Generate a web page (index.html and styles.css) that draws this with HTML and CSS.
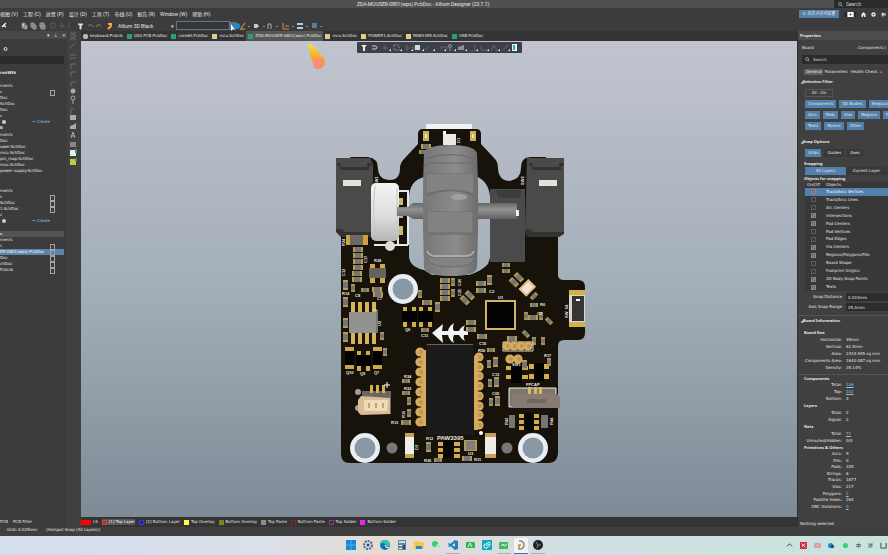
FILE: index.html
```html
<!DOCTYPE html>
<html lang="en">
  <head>
    <meta charset="UTF-8" />
    <meta name="viewport" content="width=device-width, initial-scale=1.0" />
    <title>ZDA-MOUSER-0801(wpx).PcbDoc - Altium Designer (23.7.1)</title>
    <link rel="stylesheet" href="styles.css">
  </head>
  <body>
    <header class="titlebar">
      <span class="title">ZDA-MOUSER-0801(wpx).PcbDoc - Altium Designer (23.7.1)</span>
      <label class="title-search"><svg class="ico" viewBox="0 0 10 10"><circle cx="4" cy="4" r="3"/><path d="M6 6l3 3"/></svg><input type="text" placeholder="Search" aria-label="Search"></label>
    </header>
    <nav class="menubar">
      <button>视图 (V)</button>
      <button>工程 (C)</button>
      <button>放置 (P)</button>
      <button>设计 (D)</button>
      <button>工具 (T)</button>
      <button>布线 (U)</button>
      <button>报告 (R)</button>
      <button>Window (W)</button>
      <button>帮助 (H)</button>
      <div class="account">
        <button class="license">D&nbsp; 自定义许可証書</button>
        <button class="share" aria-label="Share"><svg class="ico" viewBox="0 0 10 8"><rect x="0" y="0" width="10" height="8" fill="#fff" stroke="none"/><path d="M3 4h4M5 2v4" stroke="#333"/></svg></button>
        <button aria-label="Home"><svg class="ico solid" viewBox="0 0 10 10"><path d="M5 0l5 5H9v5H6V7H4v3H1V5H0z"/></svg></button>
        <button aria-label="Settings"><svg class="ico" viewBox="0 0 10 10"><circle cx="5" cy="5" r="3" stroke-width="3"/></svg></button>
        <button aria-label="User"><svg class="ico solid" viewBox="0 0 12 10"><circle cx="4" cy="4" r="3"/><path d="M0 9q4-4 8 0zM8 2h3v6H8z"/></svg></button>
      </div>
    </nav>
    <div class="toolbar">
      <svg class="tools" viewBox="0 0 115 12">
        <path d="M2 7l4-4M3 5l3 2" stroke="#eee" stroke-width="1.5"/>
        <path d="M22 3h3v5h-3zM24 5h3v4h-3z" fill="#ddd" stroke="#777"/>
        <path d="M31 3h3v4h-3zM33 5h3v4h-3zM40 3h4v4h-4zM41 5h4v4h-4z" fill="#777" stroke="#999"/>
        <path d="M51 3h4v5h-4zM62 3v6M59 6h6M69 3v6" stroke="#575a66"/>
        <path d="M78 4h5l-2 2v3h-1V5z" fill="#ddd" stroke="#ddd"/>
        <path d="M88 6q3-3 5 1M101 6q-3-3-5 1" stroke="#a97d4d"/>
        <path d="M108 4h3v2l-3 3" stroke="#f3aa3b" stroke-width="2"/>
      </svg>
      <span class="block-name">Altium 3D Black</span>
      <button class="arrow" aria-label="Choose view">▾</button>
      <input class="command" type="text" aria-label="Command">
      <svg class="tools2" viewBox="0 0 95 12">
        <rect x="0" y="2" width="6" height="8" fill="#47799f"/>
        <circle cx="7" cy="6" r="3" fill="#2585c5"/>
        <path d="M1 4v7l2-2 2 1z" fill="#fff"/>
        <path d="M11 8l4-5M10 9h5" stroke="#e0b03c"/>
        <path d="M24 4h3l2 2-2 2h-3z" fill="#ccc"/>
        <path d="M38 9V4h3v5" stroke="#aaa"/>
        <path d="M53 3v6h6M55 6h4" stroke="#cc9151"/>
        <path d="M67 3h6v2h-6zM67 7h6v2h-6z" fill="#a9d4f2"/>
        <path d="M82 3h5v5h-5z" fill="#547d9b"/>
        <path d="M18 6h2l-1 1zM33 6h2l-1 1zM46 6h2l-1 1zM62 6h2l-1 1zM76 6h2l-1 1zM90 6h2l-1 1z" fill="#ddd"/>
      </svg>
    </div>

    <main class="workspace">
      <aside class="projects">
        <div class="panel-head"><span>▾</span><span>⊥</span><span>×</span></div>
        <button class="gear" aria-label="Options"><svg class="ico" viewBox="0 0 10 10"><circle cx="5" cy="5" r="3" stroke-width="2"/></svg></button>
        <input class="project-search" type="text" aria-label="Search projects">
        <div class="workspace-name">rsnWtk</div>
        <ul class="tree">
          <li>ments</li>
          <li class="file">s</li>
          <li>Doc</li>
          <li>SchDoc</li>
          <li>Doc</li>
          <li>s</li>
          <li class="create"><i></i><a href="#">+ Create</a></li>
          <li><b>B</b></li>
        </ul>
        <ul class="tree">
          <li>ments</li>
          <li>Doc</li>
          <li>ower.SchDoc</li>
          <li>mcu.SchDoc</li>
          <li>pin_map.SchDoc</li>
          <li>mcu.SchDoc</li>
          <li>power supply.SchDoc</li>
        </ul>
        <ul class="tree tree-next">
          <li>ments</li>
          <li class="file">s</li>
          <li class="file">SchDoc</li>
          <li class="file">1.SchDoc</li>
          <li>c</li>
          <li class="create"><i></i><a href="#">+ Create</a></li>
        </ul>
        <ul class="tree tree-open">
          <li class="current"><b>s</b></li>
          <li>ments</li>
          <li class="file">c</li>
          <li class="file selected">ER-0801(wpx).PcbDoc</li>
          <li class="file">Doc</li>
          <li class="file">chDoc</li>
          <li class="file">PcbLib</li>
        </ul>
        <div class="panel-tabs"><button>PCB</button><button>PCB Filter</button></div>
      </aside>

      <div class="strip">
        <svg viewBox="0 0 12 140">
          <path d="M3 2h6M3 4h6M3 6l6 3M3 9l6-4M3 17l5-5M3 24h6M3 27h6M4 38v-5h5M4 46v-5h5M4 55v-4h5M4 83v-5h3" stroke="#6a6c6e"/>
          <circle cx="6" cy="60" r="2.500" fill="#aaa"/>
          <circle cx="6" cy="67" r="2" stroke="#aaa"/><path d="M6 69v4" stroke="#aaa"/>
          <path d="M3 84h6v5H3zM3 98v-3l3-1 3-2v6z" fill="#aaa"/>
          <path d="M4 107l2-6 2 6M4 105h4" stroke="#aaa"/>
          <path d="M3 111h6v5H3z" fill="#987d83"/>
          <path d="M3 119h6v6H3z" fill="#e6f0ed"/><path d="M3 128h6v6H3z" fill="#b9cf46"/><path d="M8 118h2v4H8zM8 127h2v3H8z" fill="#1aa86b"/>
        </svg>
      </div>

      <section class="editor">
        <div class="doc-tabs">
          <button><i class="lib"></i>keyboard.PcbLib</button>
          <button><i class="pcb"></i>QS2.PCB.PcbDoc</button>
          <button><i class="pcb"></i>core60.PcbDoc</button>
          <button><i class="sch"></i>mcu.SchDoc</button>
          <button class="active"><i class="pcb"></i>ZDA-MOUSER-0801(wpx).PcbDoc</button>
          <button><i class="sch"></i>mcu.SchDoc</button>
          <button><i class="sch"></i>POWER1.SchDoc</button>
          <button><i class="sch"></i>PAW3395.SchDoc</button>
          <button><i class="pcb"></i>USB.PcbDoc</button>
        </div>
        <div class="canvas">
          <svg class="active-bar" viewBox="0 0 165 11">
            <path d="M4 3h6L8 5v4H6V5z" fill="#eee"/>
            <path d="M15 4h4q2 1 0 3h-4" stroke="#ccc"/>
            <path d="M28 3v5M26 6h5M57 9V5h-3M50 3v6M49 6h4M72 4l-4 4M84 8V4l3 2 3-2v4M114 9h4V3M124 4v4h6M134 9l3-6 3 6M146 8l5-5" stroke="#62666d"/>
            <path d="M37 3h5v5h-5z" stroke="#7f858c" stroke-dasharray="2 1"/>
            <rect x="58" y="3" width="5" height="5" fill="#cbdde9"/>
            <circle cx="93" cy="4" r="1.500" stroke="#999"/><path d="M93 6v3" stroke="#999"/>
            <path d="M101 8V5l3-1 3-1v5z" fill="#998f91"/>
            <path d="M155 2h5v7h-5z" fill="#f1f7fa"/><path d="M156 3h2v5h-2z" fill="#28a0c4"/>
            <path d="M32 9h2V7zM43 9h2V7zM54 9h2V7zM65 9h2V7zM76 9h2V7zM87 9h2V7zM97 9h2V7zM108 9h2V7zM119 9h2V7zM130 9h2V7zM141 9h2V7zM151 9h2V7z" fill="#fff"/>
          </svg>
          <svg class="board" viewBox="81 41 716 476" role="img" aria-label="3D view of the mouse board">
            <defs>
              <linearGradient id="wheel" x1="0" y1="0" x2="1" y2="0">
                <stop offset="0" stop-color="#777"/><stop offset=".6" stop-color="#8c8c8c"/><stop offset="1" stop-color="#6d6d6d"/>
              </linearGradient>
              <linearGradient id="shaft" x1="0" y1="0" x2="0" y2="1">
                <stop offset="0" stop-color="#666"/><stop offset=".4" stop-color="#929292"/><stop offset="1" stop-color="#626262"/>
              </linearGradient>
              <linearGradient id="knob" x1="0" y1="0" x2="0" y2="1">
                <stop offset="0" stop-color="#f4f4f4"/><stop offset=".6" stop-color="#dcdcdc"/><stop offset="1" stop-color="#b5b5b5"/>
              </linearGradient>
              <linearGradient id="comet" x1="0" y1="0" x2="0" y2="1">
                <stop offset="0" stop-color="#f3e339"/><stop offset=".6" stop-color="#f7a32c"/><stop offset="1" stop-color="#fb8a5b"/>
              </linearGradient>
              <g id="r"><path d="M0 0h10v5H0z" fill="#b99a4e"/><path d="M2 0h6v5H2z" fill="#77756f"/></g>
              <g id="rs"><path d="M0 0h8v4H0z" fill="#aa9150"/><path d="M2 0h4v4H2z" fill="#77756f"/></g>
              <g id="v"><path d="M0 0h5v10H0z" fill="#b99a4e"/><path d="M0 2h5v6H0z" fill="#77756f"/></g>
              <g id="vs"><path d="M0 0h4v8H0z" fill="#aa9150"/><path d="M0 2h4v4H0z" fill="#77756f"/></g>
              <g id="sot"><path d="M1 0h4v20H1zM10 0h4v20h-4z" fill="#d1ac45"/><path d="M0 4h15v11H0z" fill="#020202"/></g>
              <g id="sod"><path d="M0 0h9v22H0z" fill="#c9a648"/><path d="M0 4h9v14H0z" fill="#020202"/></g>
              <g id="hole"><circle r="15" fill="#e9eef5"/><circle r="10.500" fill="#8998a5"/></g>
              <g id="pad"><circle r="4.600" fill="#dba95b"/><circle r="2" cx="1" fill="#ad9a61"/></g>
            </defs>

            <path d="M308 44q3-1 5 2l10 11q4 6 0 10-5 4-9 0l-4-13z" fill="url(#comet)"/>
            <circle cx="318" cy="63" r="5" fill="#fa8d78"/>

            <!-- usb socket and board outline -->
            <rect x="426" y="124" width="46" height="8" rx="1" fill="#f0f1f1"/>
            <path fill="#17130b" fill-rule="evenodd" d="M423 129H476Q481 129 481 134V144L495 159Q498 162 498 169Q499 181 510 181Q521 179 521 168Q521 157 531 157H545L558 163V275Q558 280 564 280H578Q585 280 585 287V333Q585 340 578 340H564Q558 340 558 346V454Q557 463 548 463H350Q341 463 341 454V165L351 157H368Q378 158 378 169Q379 180 390 180Q400 180 400 168Q400 163 404 159L418 144V134Q418 129 423 129Z
              M424 177Q409 181 409 198V257Q410 267 424 270L432 275H469Q482 271 488 264L490 258V196Q488 180 475 176Z"/>
            <path d="M423 131v10h6v-10zM470 131v10h6v-10z" fill="#ccb15d"/>
            <path d="M425 134v4h2v-4zM472 134v4h2v-4z" fill="#e9e3c1"/>
            <path d="M443 134h13v11h-13z" fill="#ece9e3"/><path d="M443 131h3v3h-3z" fill="#fff"/>
            <use href="#r" x="421" y="144"/><use href="#rs" x="419" y="150"/>

            <!-- side switches -->
            <path d="M336 158h34l3 6v68l-4 3h-28l-5-5z" fill="#4b4a49"/>
            <path d="M337 163h4v4h26v-4h5v3h-3v4h-29v-4h-3z" fill="#343332"/>
            <path d="M343 180h18v6h-18z" fill="#e2e2df"/>
            <path d="M336 229h6l3 3h27v5h-31l-5-5z" fill="#333"/>
            <path d="M527 158h37v74l-4 3h-34l-1-6z" fill="#4b4a49"/>
            <path d="M529 163h4v4h26v-4h5v3h-3v4h-29v-4h-3z" fill="#343332"/>
            <path d="M539 180h18v6h-18z" fill="#e2e2df"/>
            <path d="M525 229h5l3 3h31v2l-5 3h-32z" fill="#333"/>

            <!-- encoder, wheel and shaft -->
            <path d="M398 191h10v54M374 245h34M398 191v54" fill="none" stroke="#e8e9ec" stroke-width="2"/>
            <path d="M397 198h6v7h-6zM397 213h6v5h-6zM397 226h6v9h-6z" fill="#cfb76b"/>
            <circle cx="390" cy="246" r="5" fill="#dddcd5"/>
            <rect x="371" y="183" width="28" height="58" rx="5" fill="url(#knob)"/>
            <path d="M375 186q-3 25 1 50M397 188v49" fill="none" stroke="#c4c4c4"/>
            <path d="M490 189h35v73h-35z" fill="#4a4a4a"/><path d="M497 190h24v6l-3 2h-18l-3-2z" fill="#3c3c3c"/>
            <path d="M397 207h11l5-4h14v16h-14l-5-3h-11z" fill="url(#shaft)"/>
            <path d="M475 203h42v16h-42z" fill="url(#shaft)"/><path d="M516 210h3v6h-3z" fill="#f0f0ed"/>
            <path d="M424 153q2-8 26-8t27 8l1 30v48l-1 37q-2 8-26 8t-27-8l-1-40v-45z" fill="url(#wheel)"/>
            <path d="M426 159q25-9 50 0M424 166q3-3 8-3h40l4 3M425 174h52M426 196q25-11 50 0M424 230q27-15 54 0M425 250q2 9 14 8h27q8 0 10-7M427 212h48M427 234h46" fill="none" stroke="#6a6a6a"/>
            <path d="M426 174v20q25-8 48 0v-20M427 212v21h46v-21M427 258q3 9 24 9 21 0 24-9" fill="#828282" stroke="#6c6c6c"/>
            <ellipse cx="459" cy="197" rx="8" ry="3" fill="#a0a0a0"/>
            <path d="M427 251q2 6 12 5h26q7 0 9-5" fill="none" stroke="#aaa" stroke-width="2"/>

            <!-- passives, left half -->
            <path d="M346 235h6v10h-6zM361 235h7v10h-7z" fill="#d0a23d"/><path d="M350 235h13v10h-13z" fill="#6c6961"/>
            <use href="#r" x="353" y="247"/><use href="#r" x="353" y="253"/><use href="#r" x="353" y="259"/><use href="#r" x="353" y="265"/><use href="#r" x="352" y="271"/><use href="#r" x="352" y="277"/>
            <path d="M370 264h5v19h-5zM380 264h5v19h-5z" fill="#cfa849"/><path d="M369 268h17v10h-17z" fill="#66635b"/>
            <use href="#v" x="343" y="280"/><use href="#v" x="343" y="297"/><use href="#v" x="343" y="318"/><use href="#v" x="343" y="332"/>
            <use href="#vs" x="351" y="284"/><use href="#rs" x="361" y="288"/><use href="#r" x="372" y="287"/><use href="#r" x="373" y="292"/>
            <path d="M351 302h4v42h-4zM358 302h4v42h-4zM365 302h4v42h-4zM372 302h4v42h-4z" fill="#d8b35d"/>
            <path d="M349 312h27v21h-27z" fill="#92938f"/><path d="M373 310h4v23" fill="none" stroke="#ddd"/>
            <use href="#vs" x="380" y="332"/><use href="#vs" x="383" y="348"/>
            <use href="#sod" x="345" y="347"/><use href="#sot" x="356" y="351"/><use href="#sod" x="373" y="347"/>
            <use href="#hole" x="403" y="289"/>
            <use href="#vs" x="418" y="290"/><use href="#r" x="422" y="300"/><use href="#v" x="435" y="302"/>
            <use href="#sot" x="402" y="307"/><use href="#sot" x="418" y="307"/><use href="#rs" x="421" y="328"/>
            <use href="#r" x="440" y="278"/><use href="#r" x="440" y="284"/><use href="#r" x="440" y="290"/><use href="#r" x="440" y="296"/>
            <use href="#vs" x="451" y="278"/><use href="#vs" x="451" y="289"/>

            <!-- logo and sensor -->
            <path d="M432 333l11-9-1 7h6q1-5 6-8-2 5 0 8h5q2-4 6-6-2 4-1 6h4v4h-4q-1 3 1 6-4-2-6-6h-5q-2 4 0 8-5-3-6-8h-6l1 8z" fill="#f1f3f5"/>
            <path d="M426 344h48v91h-48z" fill="#1c1b1b"/><path d="M427 344.500h46" stroke="#66645e"/>
            <path d="M421 350h5v76h-5z" fill="#dba95b"/>
            <use href="#pad" x="420" y="352"/><use href="#pad" x="420" y="362"/><use href="#pad" x="420" y="372"/><use href="#pad" x="420" y="382"/><use href="#pad" x="420" y="392"/><use href="#pad" x="420" y="402"/><use href="#pad" x="420" y="412"/><use href="#pad" x="420" y="422"/>
            <path d="M474 356h4v74h-4z" fill="#dba95b"/>
            <use href="#pad" x="479" y="357"/><use href="#pad" x="479" y="367"/><use href="#pad" x="479" y="376"/><use href="#pad" x="479" y="386"/><use href="#pad" x="479" y="396"/><use href="#pad" x="479" y="406"/><use href="#pad" x="479" y="415"/><use href="#pad" x="479" y="425"/>
            <circle cx="481" cy="433" r="2" fill="#fff"/>
            <use href="#rs" x="402" y="379"/><use href="#rs" x="402" y="391"/><use href="#vs" x="407" y="397"/><use href="#vs" x="407" y="409"/><use href="#r" x="401" y="420"/>

            <!-- battery connector -->
            <path d="M362 391h29v23h-29z" fill="#69675f"/><path d="M370 385h3v8h-3zM376 385h3v8h-3zM382 385h3v8h-3z" fill="#d5b055"/>
            <circle cx="358" cy="392" r="3" fill="#a59d91"/><circle cx="358" cy="408" r="3" fill="#a59d91"/>
            <path d="M361 396l29 2v16l-29 1-3-3v-12z" fill="#d8bd98"/><path d="M364 400h24l-1 11h-23z" fill="#f0dab7"/>
            <path d="M369 403v5M376 403v5M383 403v5" stroke="#816d55"/>
            <path d="M387 382v6M384 385h6" stroke="#fff"/>

            <!-- bottom row -->
            <use href="#hole" x="365" y="448"/><use href="#hole" x="533" y="448"/>
            <circle cx="392" cy="448" r="5.500" fill="#777"/><circle cx="507" cy="448" r="5.500" fill="#777"/>
            <path d="M405 433h9v25h-9zM485 433h11v25h-11z" fill="#c3a359"/><path d="M405 437h9v17h-9zM485 437h11v17h-11z" fill="#efece6"/>
            <use href="#v" x="426" y="442"/><use href="#rs" x="434" y="458"/>
            <path d="M438 442h22v4h-22zM438 448h22v4h-22zM438 454h22v4h-22z" fill="#d3ad4c"/><path d="M443 440h11v18h-11z" fill="#080808"/>
            <path d="M464 440h13v11h-13z" fill="#b59a5a"/><path d="M466 441h9v9h-9z" fill="#817e78"/><use href="#r" x="462" y="456"/>

            <!-- controller and right half -->
            <path d="M485 300h31v30h-31z" fill="#d2b468"/><path d="M487 302h27v26h-27z" fill="#020202"/>
            <use href="#v" x="487" y="275"/><use href="#r" x="476" y="281"/><use href="#r" x="476" y="288"/>
            <use href="#rs" x="502" y="263"/><use href="#rs" x="502" y="269"/>
            <g transform="rotate(45 522 284)"><use href="#r" x="510" y="279"/><use href="#r" x="510" y="286"/><path d="M523 276h11v14h-11z" fill="#e4bd8b"/><path d="M525 278h7v10h-7z" fill="#f1e5d4"/><use href="#vs" x="537" y="280"/></g>
            <g transform="rotate(45 468 297)"><use href="#r" x="463" y="292"/><use href="#r" x="463" y="299"/></g>
            <use href="#r" x="466" y="320"/><use href="#r" x="466" y="327"/><use href="#r" x="477" y="334"/>
            <use href="#rs" x="530" y="303"/><use href="#r" x="528" y="315"/><use href="#vs" x="524" y="312"/><use href="#vs" x="539" y="312"/>
            <g transform="rotate(45 549 321)"><use href="#rs" x="545" y="319"/></g><g transform="rotate(45 526 334)"><use href="#rs" x="522" y="332"/></g>
            <use href="#r" x="507" y="336"/><use href="#vs" x="532" y="337"/><use href="#vs" x="541" y="337"/>
            <path d="M503 342h30v9h-30z" fill="none" stroke="#dddcd6"/>
            <use href="#pad" x="507" y="346"/><use href="#pad" x="514" y="346"/><use href="#pad" x="521" y="346"/><use href="#pad" x="528" y="346"/><use href="#pad" x="510" y="359"/><use href="#pad" x="518" y="359"/>
            <use href="#rs" x="487" y="348"/><use href="#v" x="493" y="357"/><use href="#vs" x="487" y="360"/><use href="#v" x="494" y="377"/><use href="#vs" x="488" y="379"/><use href="#v" x="495" y="396"/><use href="#vs" x="489" y="398"/>
            <path d="M506 366h22v4h-22zM506 375h22v4h-22zM529 364h20v5h-20zM529 374h20v5h-20z" fill="#d2ad48"/><path d="M511 364h11v19h-11zM534 363h10v18h-10z" fill="#020202"/>
            <use href="#v" x="522" y="360"/><use href="#vs" x="547" y="358"/>
            <path d="M509 388h47v19h-47z" fill="#7f7768" stroke="#eee"/><path d="M528 387h3v9h-3zM534 387h3v9h-3zM539 387h3v9h-3z" fill="#d8b568"/>
            <path d="M513 394h44l3 3v11h-48z" fill="#857b73"/><path d="M527 400h19M527 402h19" stroke="#5c5550"/>
            <path d="M519 414h20v4h-20zM519 420h20v4h-20zM519 426h20v4h-20z" fill="#d3ad4c"/><path d="M524 413h10v18h-10z" fill="#080808"/>
            <path d="M509 415h6v13h-6zM541 415h7v13h-7z" fill="#77756f"/>
            <path d="M569 290h16v37h-16z" fill="#d5b04b"/><path d="M569 295h16v27h-16z" fill="#d8d8d2"/><path d="M572 296h12v25h-12z" fill="#353535"/><path d="M576 299h4v2h-4z" fill="#fff"/>

            <g class="silk">
              <text x="437" y="440" class="silk-big">PAW3395</text>
              <text x="526" y="386">FPCAP</text><text x="498" y="299">U1</text><text x="374" y="262">R38</text>
              <text x="404" y="378">R34</text><text x="404" y="390">R32</text><text x="391" y="424">R13</text>
              <text x="346" y="374">Q10</text><text x="360" y="375">Q9</text><text x="374" y="374">Q7</text>
              <text x="405" y="331">Q6</text><text x="489" y="293">C2</text><text x="540" y="306">R6</text>
              <text x="537" y="315">C1</text><text x="479" y="345">C15</text><text x="478" y="352">R50</text>
              <text x="492" y="376">C13</text><text x="492" y="395">C05</text><text x="512" y="366">SW1</text>
              <text x="544" y="357">R17</text><text x="424" y="462">R36</text><text x="474" y="461">R31</text>
              <text x="426" y="440">R12</text><text x="421" y="337">C11</text><text x="468" y="455">U3</text>
              <text x="342" y="295">R14</text><text x="355" y="297">C8</text><text x="377" y="300">C7</text>
              <text transform="translate(568 318) rotate(-90)">SW_04</text>
              <text transform="translate(345 276) rotate(-90)">C12</text>
              <text transform="translate(345 246) rotate(-90)">R24</text>
              <text transform="translate(367 263) rotate(-90)">C17</text>
              <text transform="translate(381 326) rotate(-90)">U2</text>
              <text transform="translate(461 296) rotate(-90)">C25</text>
              <text transform="translate(461 286) rotate(-90)">C26</text>
              <text transform="translate(418 450) rotate(-90)">D2</text>
              <text transform="translate(405 418) rotate(-90)">R16</text>
              <text transform="translate(378 185) rotate(-90)">SW1</text>
              <text transform="translate(524 185) rotate(-90)">SW2</text>
              <text transform="translate(460 143) rotate(-90)">D1</text>
              <text transform="translate(508 425) rotate(-90)">R42</text>
              <text transform="translate(553 425) rotate(-90)">R44</text>
            </g>
          </svg>
        </div>
        <div class="layers">
          <button><i class="set"></i>LS</button>
          <button class="on"><i class="top"></i>[1] Top Layer</button>
          <button><i class="bottom"></i>[2] Bottom Layer</button>
          <button><i class="top-overlay"></i>Top Overlay</button>
          <button><i class="bottom-overlay"></i>Bottom Overlay</button>
          <button><i class="top-paste"></i>Top Paste</button>
          <button><i class="bottom-paste"></i>Bottom Paste</button>
          <button><i class="top-solder"></i>Top Solder</button>
          <button><i class="bottom-solder"></i>Bottom Solder</button>
        </div>
      </section>

      <aside class="properties">
        <h2>Properties</h2>
        <div class="scope"><span>Board</span><span>Components (</span></div>
        <label class="prop-search"><svg class="ico" viewBox="0 0 10 10"><circle cx="4" cy="4" r="3"/><path d="M6 6l3 3"/></svg><input type="text" placeholder="Search" aria-label="Search properties"></label>
        <div class="prop-tabs"><button class="on">General</button><button>Parameters</button><button>Health Check <b>▲</b></button></div>
        <h3>Selection Filter</h3>
        <button class="all-on">All - On</button>
        <div class="chips"><button>Components</button><button>3D Bodies</button><button>Keepouts</button></div>
        <div class="chips"><button>Arcs</button><button>Pads</button><button>Vias</button><button>Regions</button><button>Po</button></div>
        <div class="chips"><button>Texts</button><button>Rooms</button><button>Other</button></div>
        <h3 class="snap-head">Snap Options</h3>
        <div class="chips snaps"><button>Grids</button><button class="off">Guides</button><button class="off">Axes</button></div>
        <h4>Snapping</h4>
        <div class="switch"><button>All Layers</button><button class="off">Current Layer</button></div>
        <h4>Objects for snapping</h4>
        <table class="objects">
          <thead><tr><th>On/Off</th><th>Objects</th></tr></thead>
          <tbody>
            <tr class="selected"><td><input type="checkbox" id="o1" checked></td><td><label for="o1">Track/Arcs Vertices</label></td></tr>
            <tr><td><input type="checkbox" id="o2"></td><td><label for="o2">Track/Arcs Lines</label></td></tr>
            <tr><td><input type="checkbox" id="o3"></td><td><label for="o3">Arc Centers</label></td></tr>
            <tr><td><input type="checkbox" id="o4" checked></td><td><label for="o4">Intersections</label></td></tr>
            <tr><td><input type="checkbox" id="o5" checked></td><td><label for="o5">Pad Centers</label></td></tr>
            <tr><td><input type="checkbox" id="o6"></td><td><label for="o6">Pad Vertices</label></td></tr>
            <tr><td><input type="checkbox" id="o7"></td><td><label for="o7">Pad Edges</label></td></tr>
            <tr><td><input type="checkbox" id="o8" checked></td><td><label for="o8">Via Centers</label></td></tr>
            <tr><td><input type="checkbox" id="o9" checked></td><td><label for="o9">Regions/Polygons/Fills</label></td></tr>
            <tr><td><input type="checkbox" id="o10"></td><td><label for="o10">Board Shape</label></td></tr>
            <tr><td><input type="checkbox" id="o11"></td><td><label for="o11">Footprint Origins</label></td></tr>
            <tr><td><input type="checkbox" id="o12" checked></td><td><label for="o12">3D Body Snap Points</label></td></tr>
            <tr><td><input type="checkbox" id="o13" checked></td><td><label for="o13">Texts</label></td></tr>
          </tbody>
        </table>
        <div class="field"><label for="snap">Snap Distance</label><input id="snap" type="text" value="0.203mm"></div>
        <div class="field"><label for="axis">Axis Snap Range</label><input id="axis" type="text" value="25.4mm"></div>
        <h3 class="info-head">Board Information</h3>
        <h4>Board Size</h4>
        <table class="stats">
          <tr><th>Horizontal:</th><td>45mm</td></tr>
          <tr><th>Vertical:</th><td>61.5mm</td></tr>
          <tr><th>Area:</th><td>2334.945 sq mm</td></tr>
          <tr><th>Components Area:</th><td>1640.087 sq mm</td></tr>
          <tr><th>Density:</th><td>35.14%</td></tr>
        </table>
        <h4 class="ruled">Components</h4>
        <table class="stats">
          <tr><th>Total:</th><td><a href="#">106</a></td></tr>
          <tr><th>Top:</th><td><a href="#">102</a></td></tr>
          <tr><th>Bottom:</th><td>4</td></tr>
        </table>
        <h4>Layers</h4>
        <table class="stats">
          <tr><th>Total:</th><td>2</td></tr>
          <tr><th>Signal:</th><td>2</td></tr>
        </table>
        <h4>Nets</h4>
        <table class="stats">
          <tr><th>Total:</th><td><a href="#">71</a></td></tr>
          <tr><th>Unrouted/Hidden:</th><td>0/0</td></tr>
        </table>
        <h4>Primitives &amp; Others</h4>
        <table class="stats primitives">
          <tr><th>Arcs:</th><td>9</td></tr>
          <tr><th>Fills:</th><td>0</td></tr>
          <tr><th>Pads:</th><td>335</td></tr>
          <tr><th>Strings:</th><td>6</td></tr>
          <tr><th>Tracks:</th><td>1877</td></tr>
          <tr><th>Vias:</th><td>217</td></tr>
          <tr><th>Polygons:</th><td><a href="#">2</a></td></tr>
          <tr><th>Pad/Via Holes:</th><td>264</td></tr>
          <tr><th>DRC Violations:</th><td><a href="#">0</a></td></tr>
        </table>
        <div class="nothing">Nothing selected</div>
      </aside>
    </main>

    <footer class="status"><span>Grid: 0.025mm</span><span>(Hotspot Snap (All Layers))</span></footer>

    <div class="taskbar">
      <div class="apps">
        <button aria-label="Start"><svg viewBox="0 0 10 10"><path d="M0 0h10v10H0z" fill="#1688d8"/><path d="M5 0v10M0 5h10" stroke="#4fb1ee"/></svg></button>
        <button aria-label="Settings"><svg viewBox="0 0 10 10"><circle cx="5" cy="5" r="4" fill="none" stroke="#5d6876" stroke-width="2" stroke-dasharray="2 1"/><circle cx="5" cy="5" r="2.500" fill="#a8cbe5"/><circle cx="5" cy="5" r="1.300" fill="#244a73"/></svg></button>
        <button aria-label="Edge"><svg viewBox="0 0 10 10"><circle cx="5" cy="5" r="5" fill="#1571b9"/><path d="M0 5q0-5 5-5t5 5q-1 3-4 1 0-3-3-3-2 0-3 2z" fill="#36c3b2"/><path d="M5 5q0 3 4 3" stroke="#fff" fill="none"/></svg></button>
        <button aria-label="Calculator"><svg viewBox="0 0 10 10"><path d="M1 0h8v10H1z" fill="#64869e"/><path d="M2 1h6v2H2z" fill="#b7e4ed"/><path d="M2 5h3v1H2zM2 8h3v1H2z" fill="#eee"/><path d="M6 5h2v4H6z" fill="#30455a"/></svg></button>
        <button aria-label="Files"><svg viewBox="0 0 10 10"><path d="M0 1h4l1 1h5v7H0z" fill="#f5c842"/><path d="M2 6h6v3H2z" fill="#2585cf"/></svg></button>
        <button aria-label="WeChat"><svg viewBox="0 0 10 10"><circle cx="4" cy="4" r="3" fill="#32ce76"/><circle cx="7" cy="6" r="2" fill="#a7e7c4"/></svg></button>
        <button class="run" aria-label="VS Code"><svg viewBox="0 0 10 10"><path d="M7 0l3 1v8l-3 1-7-6 1-1 6 4V3L1 7 0 6z" fill="#197fc7"/></svg></button>
        <button aria-label="Library"><svg viewBox="0 0 10 10"><path d="M1 2h8l1 1v5H1z" fill="#35b457"/><path d="M3 7l2-4 2 4" stroke="#d9ffd9" fill="none"/></svg></button>
        <button aria-label="Link"><svg viewBox="0 0 10 10"><path d="M0 0h10v10H0z" fill="#12a8be"/><path d="M2 7q-1-3 2-3l3-2q2 1 1 3L5 8Q3 9 2 7zM4 6l3-2" stroke="#e9ffff" fill="none"/></svg></button>
        <button class="run" aria-label="Monitor"><svg viewBox="0 0 10 10"><path d="M0 2h9v7H0z" fill="#46b969"/><path d="M2 6l2-2 1 2 3-2" stroke="#dfffe3" fill="none"/></svg></button>
        <button class="front" aria-label="Altium Designer"><svg viewBox="0 0 10 10"><path d="M3 1h2q3 1 3 4T5 9H3V5h2" stroke="#a98b55" stroke-width="1.500" fill="none"/></svg></button>
        <button class="run" aria-label="OBS"><svg viewBox="0 0 10 10"><circle cx="5" cy="5" r="5" fill="#202126"/><path d="M5 5L3 2M5 5h3M5 5L4 8" stroke="#888"/></svg></button>
      </div>
      <div class="tray">
        <svg viewBox="0 0 8 8"><path d="M1 5l3-3 3 3" stroke="#333" fill="none"/></svg>
        <svg viewBox="0 0 8 8"><path d="M0 0h8v8H0z" fill="#d52d40"/><path d="M2 5l4-3M2 2l4 4" stroke="#fff"/></svg>
        <svg viewBox="0 0 8 8"><path d="M1 2h6v4H1z" fill="#edb0b5" stroke="#d27885"/></svg>
        <svg viewBox="0 0 8 8"><circle cx="3" cy="4" r="3" fill="#3683bd"/><circle cx="5" cy="5" r="2" fill="#274d72"/></svg>
        <svg viewBox="0 0 8 8"><circle cx="4" cy="4" r="3" fill="#39d378"/></svg>
        <span>中</span><span>拼</span>
        <svg viewBox="0 0 8 8"><path d="M1 1v6h6V1" stroke="#333" fill="none"/></svg>
      </div>
    </div>
  </body>
</html>
```
FILE: styles.css
```css
* {
  box-sizing: border-box;
}

body {
  margin: 0;
  height: 100vh;
  display: flex;
  flex-direction: column;
  overflow: hidden;
  background-color: #3c3c3c;
  color: #e8e8e8;
  font-family: "DejaVu Sans", "Noto Sans CJK SC", sans-serif;
  font-size: 4px;
  line-height: 6px;
}

button,
input {
  margin: 0;
  padding: 0;
  border: none;
  background: none;
  color: inherit;
  font: inherit;
  white-space: nowrap;
}

input {
  min-width: 0;
}

input::placeholder {
  color: #d4d4d4;
}

a {
  color: #8fc0e8;
}

h2,
h3,
h4,
ul {
  margin: 0;
  padding: 0;
  font-size: 4px;
  list-style: none;
}

h2,
h3,
h4,
b {
  font-family: "Noto Sans", sans-serif;
}

i {
  display: inline-block;
}

.ico {
  width: 5px;
  height: 5px;
  fill: none;
  stroke: #e4e4e4;
}

.solid {
  fill: #e4e4e4;
  stroke: none;
}

/* top bars */
.titlebar,
.menubar,
.toolbar,
.taskbar {
  font-family: Roboto, "Noto Sans CJK SC", sans-serif;
  font-size: 5px;
}

.titlebar {
  height: 8px;
  flex: none;
  display: flex;
  justify-content: flex-end;
  background-color: #4f4f4f;
}

.title {
  flex: 1;
  padding-left: 357px;
  line-height: 9px;
}

.title-search {
  display: flex;
  align-items: center;
  gap: 3px;
  width: 54px;
  padding-left: 4px;
  background-color: #2a2a2a;
}

.title-search input {
  width: 40px;
}

.menubar {
  height: 12px;
  flex: none;
  display: flex;
  align-items: center;
  gap: 5px;
}

.account {
  margin-left: auto;
  display: flex;
  align-items: center;
  gap: 5px;
  padding-right: 2px;
}

.account button {
  display: flex;
  align-items: center;
  justify-content: center;
}

.account .license {
  width: 40px;
  height: 8px;
  background-color: #5581a8;
  font-size: 4px;
}

.account .share {
  width: 12px;
  background-color: #2c2c2c;
}

.share .ico {
  width: 7px;
}

.toolbar {
  height: 11px;
  flex: none;
  display: flex;
  align-items: center;
}

.tools,
.tools2 {
  width: 115px;
  height: 12px;
  flex: none;
  fill: none;
}

.tools2 {
  width: 95px;
}

.block-name {
  width: 53px;
  padding-left: 3px;
}

.arrow {
  width: 8px;
}

.command {
  width: 54px;
  height: 9px;
  border: 1px solid #62758a;
  background-color: #363636;
}

/* workspace */
.workspace {
  flex: 1;
  min-height: 0;
  display: flex;
}

.projects {
  width: 67px;
  flex: none;
  display: flex;
  flex-direction: column;
  overflow: hidden;
}

.panel-head {
  height: 8px;
  display: flex;
  justify-content: flex-end;
  gap: 4px;
  padding-right: 1px;
  background-color: #484848;
  font-size: 5px;
  line-height: 8px;
}

.gear {
  display: flex;
  width: 6px;
  margin: 7px 0 4px 3px;
}

.gear .ico {
  height: 6px;
}

.project-search {
  width: 64px;
  height: 8px;
  background-color: #2a2a2a;
}

.workspace-name {
  margin: 6px 0 7px;
  font-weight: bold;
}

.tree {
  width: 64px;
  margin-bottom: 1px;
}

.tree li {
  display: flex;
  height: 6px;
  white-space: nowrap;
}

.tree-next {
  margin-top: 13px;
}

.tree-open {
  margin-top: 6px;
}

.file::after {
  content: "";
  width: 3px;
  height: 4px;
  margin: 1px 9px 0 auto;
  border: 1px solid #a5a5a5;
}

.create i {
  width: 4px;
  height: 4px;
  margin: 1px 0 0 2px;
  border-radius: 2px;
  background-color: #ccc;
}

.create a {
  margin: 0 14px 0 auto;
  text-decoration: none;
}

.tree .current {
  background-color: #555;
}

.tree .selected {
  background-color: #5b84ab;
  color: #fff;
}

.panel-tabs {
  display: flex;
  gap: 5px;
  margin-top: auto;
  padding-bottom: 2px;
}

.strip {
  width: 14px;
  flex: none;
  background-color: #414141;
}

.strip svg {
  width: 12px;
  height: 140px;
  fill: none;
}

.editor {
  flex: 1;
  min-width: 0;
  display: flex;
  flex-direction: column;
}

.doc-tabs {
  height: 10px;
  display: flex;
  background-color: #343436;
}

.doc-tabs button {
  display: flex;
  align-items: center;
  gap: 2px;
  padding: 0 2px;
}

.doc-tabs i {
  width: 5px;
  height: 5px;
}

.doc-tabs .active {
  background-color: #565656;
}

.lib {
  border-radius: 2px;
  background-color: #bcbcae;
}

.pcb {
  background-color: #2e9d70;
}

.sch {
  background-color: #e3cd82;
}

.canvas {
  position: relative;
  flex: 1;
  min-height: 0;
  background: linear-gradient(#c1c4cf, #a4afb9 50%, #7e8b96);
}

/* floats over the board view */
.active-bar {
  position: absolute;
  top: 1px;
  left: 0;
  right: 0;
  margin: 0 auto;
  width: 165px;
  height: 11px;
  border-radius: 1px;
  background-color: #3d4047;
  fill: none;
}

.board {
  display: block;
  width: 100%;
  height: 100%;
}

.silk {
  fill: #e9e9e4;
  font-family: "Liberation Sans", sans-serif;
  font-size: 4px;
  font-weight: bold;
}

.silk-big {
  font-size: 6px;
}

.layers {
  height: 10px;
  display: flex;
  align-items: center;
  gap: 4px;
  background-color: #343434;
}

.layers button {
  display: flex;
  align-items: center;
  gap: 2px;
}

.layers i {
  width: 5px;
  height: 5px;
}

.layers .on {
  background-color: #555;
  color: #fff;
}

.layers .set {
  width: 10px;
  background-color: #f00;
}

.layers .top {
  border: 1px solid #f33;
}

.layers .bottom {
  border: 1px solid #33f;
}

.top-overlay {
  background-color: #ffff3c;
}

.bottom-overlay {
  background-color: #818123;
}

.top-paste {
  background-color: #8d8d8d;
}

.bottom-paste {
  border: 1px solid #912121;
}

.top-solder {
  border: 1px solid #8c348c;
}

.bottom-solder {
  background-color: #ec25ec;
}

/* properties panel */
.properties {
  width: 91px;
  flex: none;
  display: flex;
  flex-direction: column;
  overflow: hidden;
  border-left: 1px solid #2f2f2f;
  background-color: #404040;
  white-space: nowrap;
}

.properties h2 {
  height: 9px;
  padding-left: 2px;
  background-color: #4c4c4c;
  line-height: 9px;
}

.properties h3 {
  height: 10px;
  padding-left: 6px;
  line-height: 10px;
}

.properties h3::before {
  content: "◢";
  margin-left: -3px;
  font-size: 3px;
}

.properties h4 {
  height: 7px;
  padding-left: 6px;
  line-height: 7px;
}

.scope {
  display: flex;
  justify-content: space-between;
  padding: 5px 0 4px 4px;
}

.scope span:last-child {
  width: 30px;
}

.prop-search {
  display: flex;
  align-items: center;
  gap: 3px;
  height: 9px;
  margin-left: 4px;
  padding-left: 3px;
  background-color: #2c2c2c;
}

.prop-tabs {
  display: flex;
  padding: 5px 0 2px 6px;
}

.prop-tabs button {
  padding: 0 1px 0 2px;
}

.prop-tabs .on {
  background-color: #606060;
}

.prop-tabs b {
  color: #e05555;
}

.all-on {
  width: 28px;
  height: 8px;
  flex: none;
  margin: 2px 0 3px 7px;
  border: 1px solid #575757;
}

.chips {
  display: flex;
  gap: 3px;
  margin: 0 0 3px 7px;
}

.chips button {
  height: 8px;
  flex: none;
  padding: 0 3px;
  background-color: #5380aa;
}

.chips .off,
.switch .off {
  background-color: #393939;
}

.properties .snap-head {
  margin-top: 4px;
}

.snaps {
  margin-top: 2px;
}

.switch {
  display: flex;
  padding-left: 7px;
}

.switch button {
  width: 41px;
  height: 8px;
  flex: none;
  background-color: #5380aa;
}

.objects {
  height: 109px;
  margin-left: 7px;
  border-collapse: collapse;
  background-color: #383838;
}

.objects th {
  text-align: left;
  font-weight: normal;
}

.objects th,
.objects td {
  padding: 0;
}

.objects th:first-child,
.objects td:first-child {
  width: 21px;
  padding-left: 2px;
}

.objects td:first-child {
  padding-left: 6px;
}

.objects label,
.objects input {
  display: block;
}

.objects .selected {
  background-color: #5380aa;
  color: #fff;
}

.objects input {
  appearance: none;
  width: 5px;
  height: 5px;
  border: 1px solid #5c5c5c;
}

.objects input:checked {
  border-color: #888;
  background-color: #555;
}

.objects input:checked::after {
  content: "✓";
  display: block;
  color: #fff;
  line-height: 3px;
}

.field {
  display: flex;
  align-items: center;
  gap: 4px;
  margin-top: 2px;
}

.field label {
  width: 44px;
  text-align: right;
}

.field input {
  width: 42px;
  height: 8px;
  padding-left: 2px;
  background-color: #2c2c2c;
}

.properties .info-head {
  height: 14px;
  margin-top: 4px;
  border-top: 1px solid #555;
}

.stats {
  border-collapse: collapse;
  width: 100%;
}

.stats th,
.stats td {
  height: 7px;
  padding: 0 4px 0 0;
}

.stats th {
  width: 48px;
  font-weight: normal;
  text-align: right;
}

.primitives {
  height: 59px;
}

.primitives th,
.primitives td {
  height: 6px;
}

.properties .ruled {
  margin-top: 3px;
  border-top: 1px solid #555;
}

.nothing {
  margin-top: auto;
  padding-left: 2px;
}

/* bottom bars */
.status {
  height: 9px;
  flex: none;
  display: flex;
  gap: 9px;
  padding-left: 7px;
  background-color: #3f3f3f;
}

.taskbar {
  position: relative;
  height: 19px;
  flex: none;
  display: flex;
  align-items: center;
  justify-content: center;
  background: linear-gradient(90deg, #d5deef, #dadfe8 30%, #e5dbd2 43%, #dfdcdc 50%, #cfdfe2 65%, #c8e4dd);
}

.apps {
  display: flex;
  gap: 3px;
}

.apps button {
  display: flex;
  justify-content: center;
  align-items: center;
  width: 14px;
  height: 16px;
  border-bottom: 1px solid transparent;
}

.apps svg {
  width: 10px;
  height: 10px;
}

.apps .run {
  border-bottom-color: #a9b1ba;
}

.apps .front {
  border-bottom-color: #2f77bd;
  background-color: #f1f3f5;
}

.tray {
  position: absolute;
  right: 1px;
  display: flex;
  gap: 7px;
  color: #222;
}

.tray svg {
  width: 7px;
  height: 7px;
}
```
